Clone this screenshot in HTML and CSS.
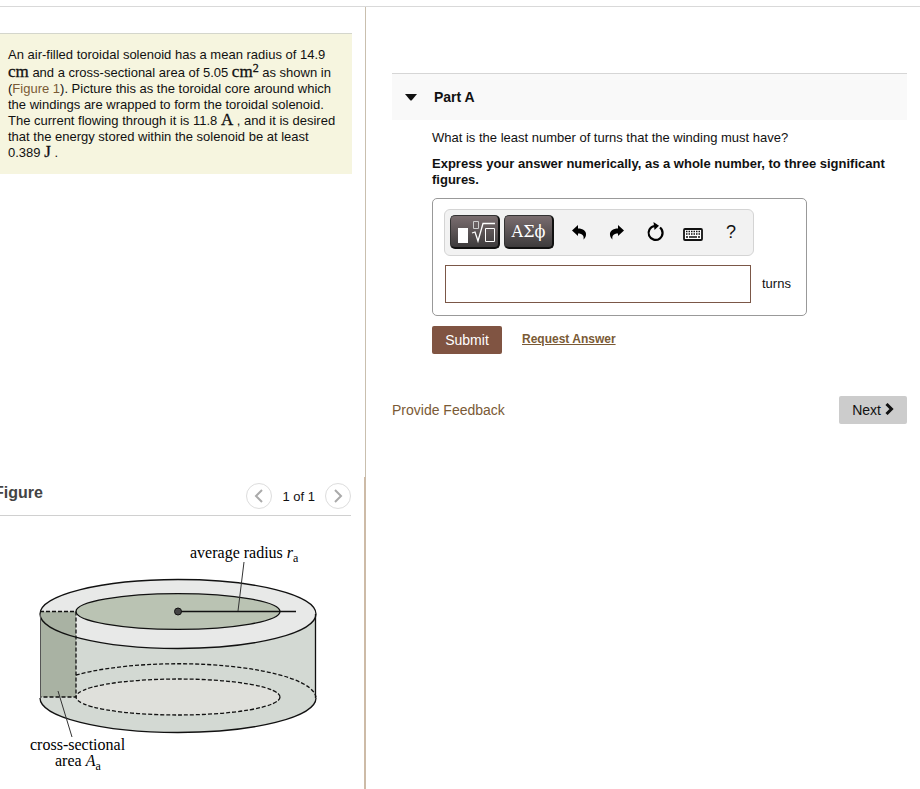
FILE: index.html
```html
<!DOCTYPE html>
<html lang="en">
<head>
    <meta charset="UTF-8">
    <meta name="viewport" content="width=device-width, initial-scale=1.0">
    <title>Toroidal Solenoid</title>
    <link rel="stylesheet" href="styles.css">
</head>
<body>
    <div class="page">
        <aside class="sidebar">
            <section class="intro">
                <p class="problem">An air-filled toroidal solenoid has a mean radius of 14.9 <span class="unit">cm</span> and a cross-sectional area of 5.05 <span class="unit">cm<sup>2</sup></span> as shown in (<a href="#figure">Figure 1</a>). Picture this as the toroidal core around which the windings are wrapped to form the toroidal solenoid. The current flowing through it is 11.8 <span class="unit">A</span> , and it is desired that the energy stored within the solenoid be at least 0.389 <span class="unit">J</span> .</p>
            </section>
            <section class="figure" id="figure">
                <header class="figure-header">
                    <h2>Figure</h2>
                    <nav class="pager">
                        <button type="button" class="round" aria-label="Previous figure">
                            <svg width="10" height="14" viewBox="0 0 10 14"><path d="M8 1 2 7l6 6" fill="none" stroke="#aaa" stroke-width="2"/></svg>
                        </button>
                        <span>1 of 1</span>
                        <button type="button" class="round" aria-label="Next figure">
                            <svg width="10" height="14" viewBox="0 0 10 14"><path d="M2 1l6 6-6 6" fill="none" stroke="#aaa" stroke-width="2"/></svg>
                        </button>
                    </nav>
                </header>
                <svg class="drawing" viewBox="0 0 351 240" role="img" aria-label="Toroidal core">
                    <!-- side wall -->
                    <path class="wall" d="M40 74V158A138 34.5 0 0 0 316 158V74A138 34.5 0 0 1 40 74Z"/>
                    <ellipse class="floor" cx="178" cy="157" rx="102" ry="18"/>
                    <!-- top ring -->
                    <ellipse class="ring" cx="178" cy="74" rx="138" ry="34.5"/>
                    <ellipse class="hole" cx="178" cy="71.5" rx="102" ry="17.8"/>
                    <!-- cut section -->
                    <path class="section" d="M40 71.500H76V157H40Z"/>
                    <path class="line" d="M40 158A138 34.5 0 0 0 316 158M315.500 74V158"/>
                    <ellipse class="line" cx="178" cy="74" rx="138" ry="34.5"/>
                    <ellipse class="line" cx="178" cy="71.5" rx="102" ry="17.8"/>
                    <ellipse class="line dashed" cx="178" cy="157" rx="102" ry="18"/>
                    <path class="line dashed" d="M76 135A138 34.5 0 0 1 316 158"/>
                    <path class="line dashed" d="M40 71.500H76V157H40"/>
                    <path class="edge" d="M40.500 74V158"/>
                    <!-- radius and leaders -->
                    <path class="line" d="M178 71.500H296"/>
                    <circle class="dot" cx="178" cy="71.500" r="3.500"/>
                    <path class="leader" d="M244 22 238 71M58 151 72 197"/>
                    <text x="190" y="18">average radius <tspan class="var">r</tspan><tspan class="sub" dy="4">a</tspan></text>
                    <text x="30" y="210">cross-sectional</text>
                    <text x="55" y="226">area <tspan class="var">A</tspan><tspan class="sub" dy="4">a</tspan></text>
                </svg>
            </section>
        </aside>

        <main class="content">
            <header class="part-header">
                <svg class="caret" width="12" height="7" viewBox="0 0 12 7"><path d="M0 0h12L7 6q-1 1-2 0z" fill="#111"/></svg>
                <h2>Part A</h2>
            </header>
            <form class="part">
                <p>What is the least number of turns that the winding must have?</p>
                <p class="instructions">Express your answer numerically, as a whole number, to three significant figures.</p>
                <div class="answer">
                    <div class="toolbar">
                        <button type="button" class="palette" aria-label="Templates">
                            <svg width="40" height="26" viewBox="0 0 40 26">
                                <path d="M3 9h10v15H3z" fill="#fff"/>
                                <g fill="none" stroke="#fff">
                                    <path d="M18.500 2.500h5v7h-5z" stroke="#ccc"/>
                                    <path d="M17 14l3-1 3 9 5-17.500h12" stroke-width="1.300"/>
                                    <path d="M30.500 9.500h9v13h-9z"/>
                                </g>
                            </svg>
                        </button>
                        <button type="button" class="palette greek">ΑΣϕ</button>
                        <button type="button" class="tool" aria-label="Undo">
                            <svg width="16" height="16" viewBox="0 0 16 16"><path d="M1 6.500 7 1v3.500c5 0 8.500 2.500 8 6.500-.2 2-1.500 3.500-2.500 4.500.7-3.500-.8-6-5.500-6V12z" fill="#000"/></svg>
                        </button>
                        <button type="button" class="tool" aria-label="Redo">
                            <svg width="16" height="16" viewBox="0 0 16 16"><path d="M15 6.500 9 1v3.500c-5 0-8.500 2.500-8 6.500.2 2 1.500 3.500 2.500 4.500-.7-3.500.8-6 5.500-6V12z" fill="#000"/></svg>
                        </button>
                        <button type="button" class="tool" aria-label="Reset">
                            <svg width="18" height="20" viewBox="0 0 18 20"><path d="M14 5.500A7 7 0 1 1 8.500 4" fill="none" stroke="#000" stroke-width="2.200"/><path d="M7.500 0 13 3.800 8.500 8z" fill="#000"/></svg>
                        </button>
                        <button type="button" class="tool" aria-label="Keyboard shortcuts">
                            <svg class="keys" width="20" height="13" viewBox="0 0 20 13">
                                <rect x="1" y="1" width="18" height="11" rx="1" fill="#fff" stroke="#111" stroke-width="1.800"/>
                                <path d="M3 3.500h14M3 6h14" stroke="#111" stroke-width="1.500" stroke-dasharray="1.500 1"/>
                                <path d="M3 9h2M6 9h8M15 9h2" stroke="#111" stroke-width="1.500"/>
                            </svg>
                        </button>
                        <button type="button" class="tool help" aria-label="Help">?</button>
                    </div>
                    <div class="entry">
                        <input type="text" id="turns" class="value">
                        <label for="turns">turns</label>
                    </div>
                </div>
                <div class="actions">
                    <button type="submit" class="submit">Submit</button>
                    <a href="#" class="request">Request Answer</a>
                </div>
            </form>
            <footer class="footer">
                <a href="#">Provide Feedback</a>
                <button type="button" class="next">Next
                    <svg width="9" height="12" viewBox="0 0 9 12"><path d="M1.500 1l5 5-5 5" fill="none" stroke="#111" stroke-width="3"/></svg>
                </button>
            </footer>
        </main>
    </div>
</body>
</html>
```
FILE: styles.css
```css
* {
    box-sizing: border-box;
}
body {
    margin: 0;
    padding-top: 6px;
    font-family: "Liberation Sans", Arial, sans-serif;
    font-size: 13px;
    line-height: 16px;
    color: #111;
    background-color: #fff;
}
h2, p {
    margin: 0;
}
a {
    color: #7a5a35;
    text-decoration: none;
}
button {
    font-family: inherit;
    padding: 0;
    border: none;
    cursor: pointer;
}
.page {
    display: grid;
    grid-template-columns: 366px 1fr;
    min-height: calc(100vh - 6px);
    border-top: 1px solid #d9d9d9;
}
.sidebar {
    display: flex;
    flex-direction: column;
}
.intro {
    min-height: 470px;
    padding: 26px 13px 0 0;
    border-right: 1px solid #c9bfae;
}
.problem {
    padding: 13px 8px;
    background-color: #f6f5df;
    border-top: 1px solid #d4d6cc;
}
.unit {
    font-family: "Liberation Serif", serif;
    font-size: 17px;
    line-height: 0;
    -webkit-text-stroke: 0.3px #111;
}
.unit sup {
    font-size: 12px;
    line-height: 10px;
    vertical-align: 5px;
}
.figure {
    flex: 1;
    padding-right: 13px;
    border-right: 2px solid #cdbba7;
}
.figure-header {
    display: flex;
    justify-content: space-between;
    height: 39px;
    padding-top: 6px;
    border-bottom: 1px solid #d0d0d0;
}
.figure-header h2 {
    margin-left: -6px;
    font-size: 16px;
    line-height: 20px;
    color: #444;
}
.pager {
    display: flex;
    gap: 10px;
    line-height: 28px;
}
.round {
    display: flex;
    align-items: center;
    justify-content: center;
    width: 26px;
    height: 26px;
    background-color: #fff;
    border: 1px solid #ddd;
    border-radius: 50%;
}
.drawing {
    display: block;
    width: 100%;
    margin-top: 24px;
    font-family: "Liberation Serif", serif;
    font-size: 16px;
}
.wall {
    fill: #d3d9d3;
}
.floor {
    fill: #dfe0db;
}
.ring {
    fill: #e8e9e8;
}
.hole {
    fill: #bac3b3;
}
.section {
    fill: #a9b2a3;
}
.line {
    fill: none;
    stroke: #111;
    stroke-width: 1.3;
}
.dashed {
    stroke-dasharray: 4 2;
}
.edge {
    stroke: #555;
}
.leader {
    stroke: #333;
}
.dot {
    fill: #444;
    stroke: #111;
}
.var {
    font-style: italic;
}
.sub {
    font-size: 12px;
}
.content {
    padding: 66px 13px 20px 26px;
}
.part-header {
    display: flex;
    align-items: center;
    gap: 17px;
    height: 47px;
    padding-left: 13px;
    background-color: #f9f9f9;
    border-top: 1px solid #d6d6d6;
}
.part-header h2 {
    font-size: 14px;
}
.part {
    padding: 10px 0 0 40px;
}
.instructions {
    margin-top: 10px;
    font-weight: bold;
}
.answer {
    width: 375px;
    max-width: 100%;
    margin-top: 10px;
    padding: 10px 11px 12px;
    border: 1px solid #999;
    border-radius: 5px;
}
.toolbar {
    display: flex;
    align-items: flex-start;
    gap: 4px;
    width: 310px;
    height: 47px;
    padding: 5px;
    background-color: #f2f2f2;
    border: 1px solid #d4d4d4;
    border-radius: 6px;
}
.palette {
    display: flex;
    align-items: center;
    justify-content: center;
    width: 50px;
    height: 34px;
    color: #fff;
    background: linear-gradient(#7a6d6f, #3d3b3c);
    border: 1px solid #333;
    border-right: 2px solid #111;
    border-bottom: 2px solid #111;
    border-radius: 5px;
}
.greek {
    font-family: "DejaVu Serif", serif;
    font-size: 16px;
}
.tool {
    display: flex;
    align-items: center;
    justify-content: center;
    width: 34px;
    height: 34px;
    color: #111;
    background: none;
}
.greek + .tool {
    margin-left: 4px;
}
.keys {
    margin-top: 4px;
}
.help {
    font-size: 18px;
}
.entry {
    display: flex;
    align-items: center;
    gap: 11px;
    margin-top: 9px;
    padding-left: 1px;
}
.value {
    width: 306px;
    height: 38px;
    padding: 0 8px;
    font-size: 16px;
    background-color: #fff;
    border: 1px solid #7b5747;
}
.actions {
    display: flex;
    gap: 20px;
    margin-top: 10px;
}
.submit {
    width: 70px;
    height: 28px;
    font-size: 14px;
    color: #fff;
    background-color: #805442;
    border-radius: 2px;
}
.request {
    padding-top: 5px;
    font-size: 12px;
    font-weight: bold;
    text-decoration: underline;
}
.footer {
    display: flex;
    align-items: center;
    justify-content: space-between;
    margin-top: 42px;
    font-size: 14px;
}
.next {
    width: 68px;
    height: 28px;
    font-size: 14px;
    color: #111;
    background-color: #ccc;
    border-radius: 2px;
}
```
